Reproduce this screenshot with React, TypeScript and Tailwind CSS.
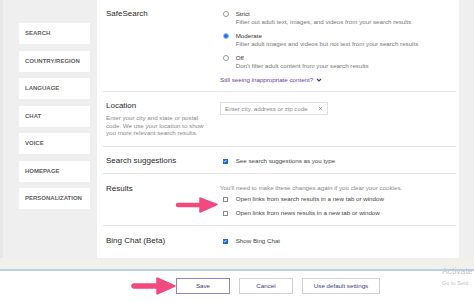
import React from 'react';

const navItems = ['SEARCH', 'COUNTRY/REGION', 'LANGUAGE', 'CHAT', 'VOICE', 'HOMEPAGE', 'PERSONALIZATION'];

const Radio = ({ checked }: { checked?: boolean }) => (
  <span className="w-[15.7px] shrink-0 flex items-center">
    {checked ? (
      <span className="ml-[2.5px] w-[6px] h-[6px] rounded-full bg-[#1a73e8] border border-[#9cc3f5]" />
    ) : (
      <span className="ml-[2.5px] w-[6px] h-[6px] rounded-full border border-[#9a9a9a] bg-white" />
    )}
  </span>
);

const Check = ({ checked }: { checked?: boolean }) => (
  <span className="w-[15.7px] shrink-0 flex items-center">
    {checked ? (
      <span className="ml-[2.7px] w-[5px] h-[5px] bg-[#1d6fd6] flex items-center justify-center">
        <svg width="4" height="4" viewBox="0 0 10 10">
          <path d="M1.5 5.2 L4 7.6 L8.6 2.4" stroke="white" strokeWidth="2" fill="none" />
        </svg>
      </span>
    ) : (
      <span className="ml-[2.7px] w-[5px] h-[5px] border border-[#8a8a8a] bg-white" />
    )}
  </span>
);

const Option = ({ label, desc, checked }: { label: string; desc: string; checked?: boolean }) => (
  <div>
    <div className="flex items-center leading-[8px] text-[6.2px] text-[#333]">
      <Radio checked={checked} />
      <span>{label}</span>
    </div>
    <div className="pl-[15.7px] leading-[8px] text-[6.2px] text-[#777]">{desc}</div>
  </div>
);

const CheckRow = ({ label, checked }: { label: string; checked?: boolean }) => (
  <div className="flex items-center leading-[8px] text-[6.2px] text-[#444]">
    <Check checked={checked} />
    <span>{label}</span>
  </div>
);

const Title = ({ children }: { children: React.ReactNode }) => (
  <div className="leading-[10px] text-[8px] text-[#2b2b2b]">{children}</div>
);

export default function App() {
  return (
    <div
      className="relative w-[474px] h-[302px] overflow-hidden bg-white"
      style={{ fontFamily: '"Liberation Sans", Arial, sans-serif' }}
    >
      <div className="flex h-[258px]">
        {/* sidebar */}
        <div className="w-[97px] shrink-0 bg-[#efefef] border-l-[3px] border-[#e7e7e7] pt-[23px] pl-[16px] flex flex-col gap-[6.5px]">
          {navItems.map((item) => (
            <div
              key={item}
              className="w-[71px] h-[21px] bg-white flex items-center pl-[6px] text-[6px] font-bold text-[#5f5f5f]"
            >
              {item}
            </div>
          ))}
        </div>

        {/* main panel */}
        <div className="w-[362px] shrink-0 bg-white pl-[6px] pr-[3px] flex flex-col">
          <div className="h-[92px] border-b border-[#e6e6e6] pl-[3px] pt-[9px] flex">
            <div className="w-[114px] shrink-0">
              <Title>SafeSearch</Title>
            </div>
            <div className="pt-[1px] flex flex-col gap-[6px]">
              <Option label="Strict" desc="Filter out adult text, images, and videos from your search results" />
              <Option checked label="Moderate" desc="Filter adult images and videos but not text from your search results" />
              <Option label="Off" desc="Don't filter adult content from your search results" />
              <div className="flex items-center gap-[2px] leading-[8px] text-[6.2px] text-[#6a3ea6]">
                <span>Still seeing inappropriate content?</span>
                <svg width="6" height="4" viewBox="0 0 12 8" className="ml-[1px]">
                  <path d="M2 2 L6 6 L10 2" stroke="#4b2c8a" strokeWidth="2.2" fill="none" />
                </svg>
              </div>
            </div>
          </div>

          <div className="h-[55px] border-b border-[#e6e6e6] pl-[3px] pt-[9px] flex">
            <div className="w-[114px] shrink-0">
              <Title>Location</Title>
              <div className="mt-[3px] leading-[7.7px] text-[6.2px] text-[#8a8a8a]">
                <div>Enter your city and state or postal</div>
                <div>code. We use your location to show</div>
                <div>you more relevant search results.</div>
              </div>
            </div>
            <div className="pt-[1px]">
              <div className="w-[108px] h-[13px] border border-[#e0e0e0] flex items-center justify-between pl-[4px] pr-[4px] text-[6.2px] text-[#8a8a8a]">
                <span>Enter city, address or zip code</span>
                <svg width="5" height="5" viewBox="0 0 10 10">
                  <path d="M1.5 1.5 L8.5 8.5 M8.5 1.5 L1.5 8.5" stroke="#777" strokeWidth="1.2" />
                </svg>
              </div>
            </div>
          </div>

          <div className="h-[27px] border-b border-[#e6e6e6] pl-[3px] pt-[9px] flex">
            <div className="w-[114px] shrink-0">
              <Title>Search suggestions</Title>
            </div>
            <div className="pt-[1px]">
              <CheckRow checked label="See search suggestions as you type" />
            </div>
          </div>

          <div className="h-[52px] border-b border-[#e6e6e6] pl-[3px] pt-[10px] flex">
            <div className="w-[114px] shrink-0">
              <Title>Results</Title>
            </div>
            <div>
              <div className="leading-[8px] text-[6.2px] text-[#888]">
                You'll need to make these changes again if you clear your cookies.
              </div>
              <div className="mt-[3px]">
                <CheckRow label="Open links from search results in a new tab or window" />
              </div>
              <div className="mt-[6px]">
                <CheckRow label="Open links from news results in a new tab or window" />
              </div>
            </div>
          </div>

          <div className="flex-1 pl-[3px] pt-[10px] flex">
            <div className="w-[114px] shrink-0">
              <Title>Bing Chat (Beta)</Title>
            </div>
            <div className="pt-[1px]">
              <CheckRow checked label="Show Bing Chat" />
            </div>
          </div>
        </div>

        <div className="flex-1 bg-[#efefef]" />
      </div>

      {/* bottom strip + divider */}
      <div className="h-[11px] bg-[#f1f1ec]" />
      <div className="h-[2px] bg-[#b8d0ec]" />

      {/* footer buttons */}
      <div className="pt-[7px] pl-[176px] flex gap-[9px] text-[6.2px] text-[#3d3d72]">
        <div className="w-[54px] h-[16px] border border-[#9083c8] flex items-center justify-center">Save</div>
        <div className="w-[54px] h-[16px] border border-[#d2d2d2] flex items-center justify-center">Cancel</div>
        <div className="w-[78px] h-[16px] border border-[#d2d2d2] flex items-center justify-center">Use default settings</div>
      </div>

      {/* windows watermark (cut off at the window edge in the capture) */}
      <div className="absolute left-[442px] top-[266px] whitespace-nowrap text-[#c4c4c4]">
        <div className="text-[8.6px] leading-[11px]">Activate</div>
        <div className="text-[5.6px] leading-[8px] mt-[2px]">Go to Setti</div>
      </div>

      {/* annotation arrows */}
      <svg className="absolute left-[174px] top-[195px]" width="46" height="20" viewBox="0 0 46 20">
        <path d="M4 10 L30 10" stroke="#f2497f" strokeWidth="4.5" strokeLinecap="round" />
        <path d="M26 3 L43 9.5 L26 17 Z" fill="#f2497f" stroke="#f2497f" strokeWidth="1.5" strokeLinejoin="round" />
      </svg>
      <svg className="absolute left-[129px] top-[276px]" width="48" height="20" viewBox="0 0 48 20">
        <path d="M5 10 L32 10" stroke="#f2497f" strokeWidth="5.5" strokeLinecap="round" />
        <path d="M28 2 L46 10 L28 18 Z" fill="#f2497f" stroke="#f2497f" strokeWidth="1.5" strokeLinejoin="round" />
      </svg>
    </div>
  );
}
